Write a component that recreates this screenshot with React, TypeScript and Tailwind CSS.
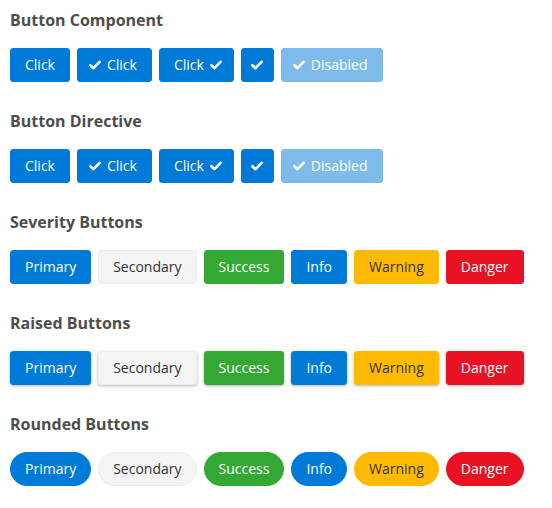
import React from "react";

const Check = () => (
  <svg width="12" height="10" viewBox="0 0 12 10" className="shrink-0">
    <polyline
      points="1.4,5.2 4.5,8.2 10.6,1.8"
      fill="none"
      stroke="currentColor"
      strokeWidth="2.6"
      strokeLinecap="round"
      strokeLinejoin="round"
    />
  </svg>
);

type Sev = "primary" | "secondary" | "success" | "info" | "warning" | "danger";

const sevClass: Record<Sev, string> = {
  primary: "bg-[#007ad9] border-[#007ad9] text-white",
  secondary: "bg-[#f4f4f4] border-[#ececec] text-[#333333]",
  success: "bg-[#34a835] border-[#34a835] text-white",
  info: "bg-[#007ad9] border-[#007ad9] text-white",
  warning: "bg-[#ffba01] border-[#ffba01] text-[#333333]",
  danger: "bg-[#e91224] border-[#e91224] text-white",
};

const Btn = ({
  label,
  icon,
  iconPos = "left",
  sev = "primary",
  disabled,
  raised,
  rounded,
}: {
  label?: string;
  icon?: boolean;
  iconPos?: "left" | "right";
  sev?: Sev;
  disabled?: boolean;
  raised?: boolean;
  rounded?: boolean;
}) => {
  // padding depends on where the icon sits
  let pad = "px-[14px]";
  if (!label) pad = "w-[33px] justify-center";
  else if (icon && iconPos === "left") pad = "pl-[11px] pr-[14px]";
  else if (icon) pad = "pl-[14px] pr-[11px]";
  return (
    <button
      className={[
        "h-[34px] flex items-center gap-[6px] border text-[14px] leading-none",
        pad,
        sevClass[sev],
        rounded ? "rounded-full" : "rounded-[3px]",
        raised ? "shadow-[0_1px_3px_rgba(0,0,0,0.3)]" : "",
        disabled ? "opacity-50" : "",
      ].join(" ")}
    >
      {icon && iconPos === "left" && <Check />}
      {label && <span>{label}</span>}
      {icon && iconPos === "right" && <Check />}
    </button>
  );
};

const Section = ({ title, children }: { title: string; children: React.ReactNode }) => (
  <div className="flex flex-col">
    <h5 className="text-[16px] leading-[24px] font-bold text-[#4d4d4d] mb-[16px]">{title}</h5>
    <div className="flex gap-[7px]">{children}</div>
  </div>
);

const sevs: [Sev, string][] = [
  ["primary", "Primary"],
  ["secondary", "Secondary"],
  ["success", "Success"],
  ["info", "Info"],
  ["warning", "Warning"],
  ["danger", "Danger"],
];

export default function App() {
  const basics = (
    <>
      <Btn label="Click" />
      <Btn label="Click" icon />
      <Btn label="Click" icon iconPos="right" />
      <Btn icon />
      <Btn label="Disabled" icon disabled />
    </>
  );
  return (
    <div className="bg-white px-[10px] pt-[8px] flex flex-col gap-[27px]" style={{ fontFamily: '"Open Sans", sans-serif' }}>
      <Section title="Button Component">{basics}</Section>
      <Section title="Button Directive">{basics}</Section>
      <Section title="Severity Buttons">
        {sevs.map(([s, l]) => (
          <Btn key={s} sev={s} label={l} />
        ))}
      </Section>
      <Section title="Raised Buttons">
        {sevs.map(([s, l]) => (
          <Btn key={s} sev={s} label={l} raised />
        ))}
      </Section>
      <Section title="Rounded Buttons">
        {sevs.map(([s, l]) => (
          <Btn key={s} sev={s} label={l} rounded />
        ))}
      </Section>
    </div>
  );
}
